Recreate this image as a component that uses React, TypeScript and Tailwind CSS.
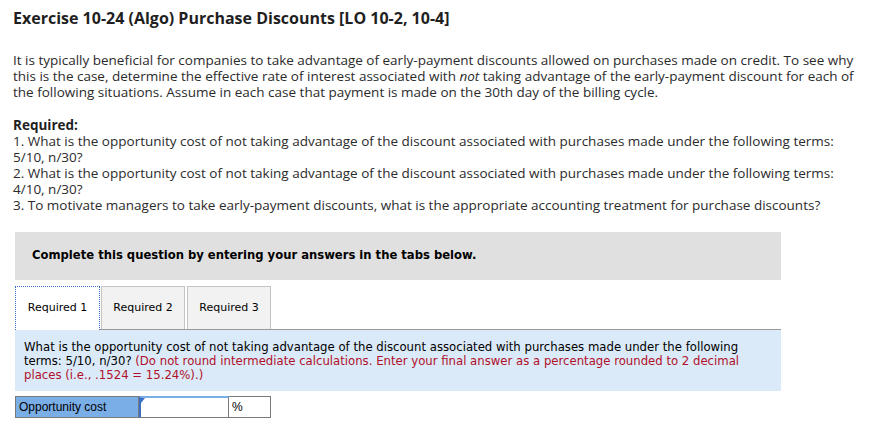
export default function App() {
  const body = { fontFamily: '"Open Sans", Lato, sans-serif' };
  const verd = { fontFamily: '"DejaVu Sans", Verdana, sans-serif' };
  return (
    <div className="w-[894px] h-[424px] bg-white text-[#2b2b2b] overflow-hidden relative">
      <div className="pl-[13px] pt-[6px]" style={body}>
        <h1 className="text-[16px] font-bold text-[#1f1f1f] leading-[24px]">
          Exercise 10-24 (Algo) Purchase Discounts [LO 10-2, 10-4]
        </h1>
        <p className="mt-[22px] text-[13.5px] leading-[16px] whitespace-nowrap">
          It is typically beneficial for companies to take advantage of early-payment discounts allowed on purchases made on credit. To see why<br />
          this is the case, determine the effective rate of interest associated with <i>not</i> taking advantage of the early-payment discount for each of<br />
          the following situations. Assume in each case that payment is made on the 30th day of the billing cycle.
        </p>
        <div className="mt-[17px] text-[13.5px] leading-[16px] whitespace-nowrap">
          <div className="font-bold text-[#1f1f1f]">Required:</div>
          <div>1. What is the opportunity cost of not taking advantage of the discount associated with purchases made under the following terms:</div>
          <div>5/10, n/30?</div>
          <div>2. What is the opportunity cost of not taking advantage of the discount associated with purchases made under the following terms:</div>
          <div>4/10, n/30?</div>
          <div>3. To motivate managers to take early-payment discounts, what is the appropriate accounting treatment for purchase discounts?</div>
        </div>
      </div>
      <div className="ml-[15px] w-[766px] mt-[19px]" style={verd}>
        <div className="bg-[#e0e0e0] h-[48px] flex items-center pl-[17px]">
          <span className="text-[11.6px] font-bold text-black">Complete this question by entering your answers in the tabs below.</span>
        </div>
        <div className="mt-[6px] flex items-end h-[44px] border-b border-[#9a9a9a]">
          <div className="w-[85px] h-[44px] bg-white border border-dotted border-[#3b6fc4] border-b-0 -mb-px flex items-center justify-center text-[11px] text-black pb-[1px] relative z-10">
            Required 1
          </div>
          <div className="ml-[1px] w-[84px] h-[43px] bg-[#f2f2f2] border border-[#c4c4c4] border-b-0 flex items-center justify-center text-[11px] text-black">
            Required 2
          </div>
          <div className="ml-[2px] w-[84px] h-[43px] bg-[#f2f2f2] border border-[#c4c4c4] border-b-0 flex items-center justify-center text-[11px] text-black">
            Required 3
          </div>
        </div>
        <div className="bg-[#dbeaf8] pl-[9px] pt-[10px] pb-[9px] text-[11.7px] leading-[14px] text-black whitespace-nowrap">
          What is the opportunity cost of not taking advantage of the discount associated with purchases made under the following<br />
          terms: 5/10, n/30? <span className="text-[#b0102a]">(Do not round intermediate calculations. Enter your final answer as a percentage rounded to 2 decimal<br />
          places (i.e., .1524 = 15.24%).)</span>
        </div>
        <div className="mt-[5px] flex h-[22px]" style={{ fontFamily: '"Liberation Sans", Arial, sans-serif' }}>
          <div className="w-[124px] bg-[#7aaee6] border border-[#7a7a7a] flex items-center pl-[3px] text-[12px] text-black">Opportunity cost</div>
          <div className="w-[90px] bg-white border border-[#7a7a7a] border-l-2 border-l-[#3b6fc4] border-t-2 border-t-[#7aaee6] relative">
            <div className="absolute left-0 top-0 w-0 h-0 border-t-[5px] border-t-[#3b6fc4] border-r-[4px] border-r-transparent"></div>
          </div>
          <div className="w-[42px] bg-white border border-[#7a7a7a] border-l-0 flex items-center pl-[3px] text-[12px] text-black">%</div>
        </div>
      </div>
    </div>
  );
}
